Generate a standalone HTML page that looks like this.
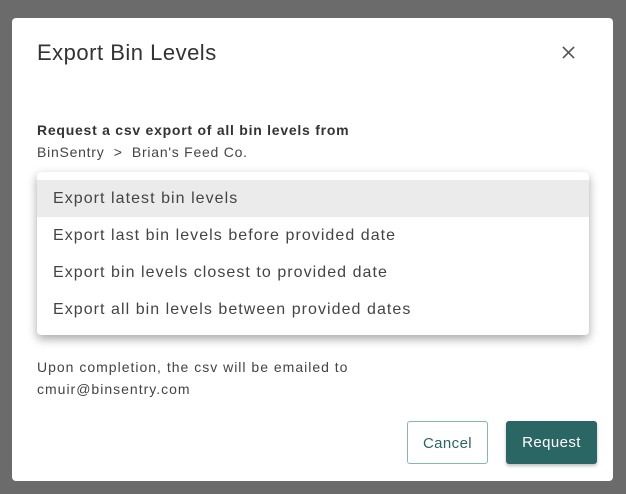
<!DOCTYPE html>
<html><head><style>
body{margin:0;width:626px;height:494px;background:#6b6b6b;font-family:"Liberation Sans",sans-serif;position:relative;overflow:hidden}
.dlg{position:absolute;left:12px;top:18px;width:601px;height:463px;background:#fff;border-radius:4px}
.t{position:absolute;left:25px;top:22px;font-size:22px;color:#333;letter-spacing:.5px}
.x{position:absolute;left:550px;top:28px}
.p{position:absolute;left:25px;font-size:14px;color:#444;letter-spacing:1px}
.dd{position:absolute;left:37px;top:172px;width:552px;height:163px;background:#fff;border-radius:4px;box-shadow:0 4px 10px rgba(0,0,0,.35)}
.it{position:absolute;left:0;width:552px;height:37px;line-height:37px;padding-left:16px;box-sizing:border-box;font-size:16px;color:#444;letter-spacing:1.05px}
.b{position:absolute;top:403px;height:43px;border-radius:3px;font-size:15px;text-align:center;line-height:43px;box-sizing:border-box;letter-spacing:.4px}
</style></head><body>
<div class="dlg">
<div class="t">Export Bin Levels</div>
<svg class="x" width="13" height="13" viewBox="0 0 14 14"><path d="M1 1L13 13M13 1L1 13" stroke="#555" stroke-width="1.8"/></svg>
<div class="p" style="top:104px;font-weight:bold;letter-spacing:.75px;color:#333">Request a csv export of all bin levels from</div>
<div class="p" style="top:126px;letter-spacing:.75px">BinSentry &nbsp;&gt;&nbsp; Brian's Feed Co.</div>
<div class="p" style="top:341px">Upon completion, the csv will be emailed to</div>
<div class="p" style="top:363px">cmuir@binsentry.com</div>
<div class="b" style="left:395px;width:81px;border:1px solid #8ab3b3;color:#2a6664">Cancel</div>
<div class="b" style="left:494px;width:91px;background:#2a6664;color:#fff;box-shadow:0 2px 3px rgba(0,0,0,.25)">Request</div>
</div>
<div class="dd">
<div class="it" style="top:8px;background:#ebebeb">Export latest bin levels</div>
<div class="it" style="top:45px">Export last bin levels before provided date</div>
<div class="it" style="top:82px">Export bin levels closest to provided date</div>
<div class="it" style="top:119px">Export all bin levels between provided dates</div>
</div>
</body></html>
